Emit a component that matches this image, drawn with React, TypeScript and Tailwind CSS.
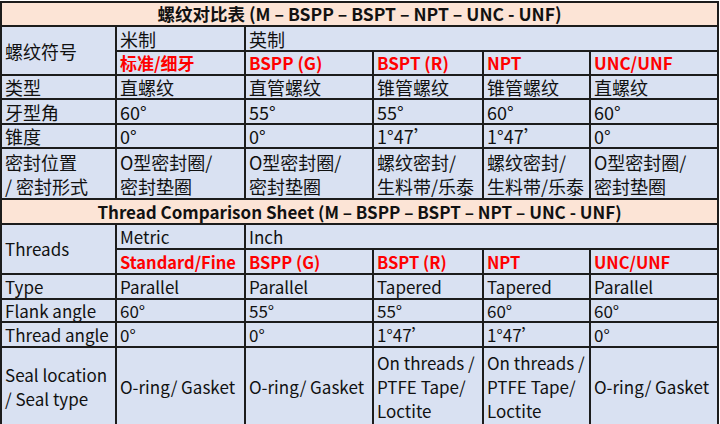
import React from "react"

type CellProps = {
  children?: React.ReactNode
  className?: string
  head?: boolean
  red?: boolean
}

function Cell({ children, className = "", head, red }: CellProps) {
  const bg = head ? "bg-[#fce4d6] justify-center font-bold" : "bg-[#d9e1f2] pl-[3px]"
  const color = red ? "text-[#ff0000] font-bold" : "text-[#111]"
  return (
    <div className={`flex items-center whitespace-nowrap ${bg} ${color} ${className}`}>
      <div className="leading-[24px]">{children}</div>
    </div>
  )
}

const zhTitle = "螺纹对比表 (M – BSPP – BSPT – NPT – UNC - UNF)"
const enTitle = "Thread Comparison Sheet (M – BSPP – BSPT – NPT – UNC - UNF)"

const zhHeads = ["标准/细牙", "BSPP (G)", "BSPT (R)", "NPT", "UNC/UNF"]
const enHeads = ["Standard/Fine", "BSPP (G)", "BSPT (R)", "NPT", "UNC/UNF"]

const zhRows: string[][] = [
  ["类型", "直螺纹", "直管螺纹", "锥管螺纹", "锥管螺纹", "直螺纹"],
  ["牙型角", "60°", "55°", "55°", "60°", "60°"],
  ["锥度", "0°", "0°", "1°47’", "1°47’", "0°"],
]

const enRows: string[][] = [
  ["Type", "Parallel", "Parallel", "Tapered", "Tapered", "Parallel"],
  ["Flank angle", "60°", "55°", "55°", "60°", "60°"],
  ["Thread angle", "0°", "0°", "1°47’", "1°47’", "0°"],
]

function Lines({ lines }: { lines: string[] }) {
  return (
    <>
      {lines.map((l, i) => (
        <div key={i}>{l}</div>
      ))}
    </>
  )
}

export default function App() {
  return (
    <div className="w-[720px] h-[424px] overflow-hidden bg-white">
      <div
        className="mt-px w-[719px] p-[2px] bg-[#1c1c1c] grid gap-[2px] grid-cols-[113px_127px_126px_108px_105px_126px] grid-rows-[22px_23px_22px_22px_23px_22px_49px_23px_23px_23px_23px_21px_23px_78px]"
        style={{ fontFamily: '"Noto Sans CJK SC", "Noto Sans", sans-serif' }}
      >
        <Cell head className="col-span-6 text-[17.5px]">{zhTitle}</Cell>

        <Cell className="row-span-2 text-[18px]">螺纹符号</Cell>
        <Cell className="text-[18px]">米制</Cell>
        <Cell className="col-span-4 text-[18px]">英制</Cell>
        {zhHeads.map((h, i) => (
          <Cell key={i} red className="text-[17px]">{h}</Cell>
        ))}

        {zhRows.map((row, r) =>
          row.map((c, i) => (
            <Cell key={`z${r}-${i}`} className="text-[18px]">{c}</Cell>
          ))
        )}

        <Cell className="text-[18px]"><Lines lines={["密封位置", "/ 密封形式"]} /></Cell>
        <Cell className="text-[18px]"><Lines lines={["O型密封圈/", "密封垫圈"]} /></Cell>
        <Cell className="text-[18px]"><Lines lines={["O型密封圈/", "密封垫圈"]} /></Cell>
        <Cell className="text-[18px]"><Lines lines={["螺纹密封/", "生料带/乐泰"]} /></Cell>
        <Cell className="text-[18px]"><Lines lines={["螺纹密封/", "生料带/乐泰"]} /></Cell>
        <Cell className="text-[18px]"><Lines lines={["O型密封圈/", "密封垫圈"]} /></Cell>

        <Cell head className="col-span-6 text-[17px]">{enTitle}</Cell>

        <Cell className="row-span-2 text-[17px]">Threads</Cell>
        <Cell className="text-[17px]">Metric</Cell>
        <Cell className="col-span-4 text-[17px]">Inch</Cell>
        {enHeads.map((h, i) => (
          <Cell key={i} red className="text-[16.5px]">{h}</Cell>
        ))}

        {enRows.map((row, r) =>
          row.map((c, i) => (
            <Cell key={`e${r}-${i}`} className="text-[17px]">{c}</Cell>
          ))
        )}

        <Cell className="text-[17px]"><Lines lines={["Seal location", "/ Seal type"]} /></Cell>
        <Cell className="text-[17px]">O-ring/ Gasket</Cell>
        <Cell className="text-[17px]">O-ring/ Gasket</Cell>
        <Cell className="text-[17px]"><Lines lines={["On threads /", "PTFE Tape/", "Loctite"]} /></Cell>
        <Cell className="text-[17px]"><Lines lines={["On threads /", "PTFE Tape/", "Loctite"]} /></Cell>
        <Cell className="text-[17px]">O-ring/ Gasket</Cell>
      </div>
    </div>
  )
}
